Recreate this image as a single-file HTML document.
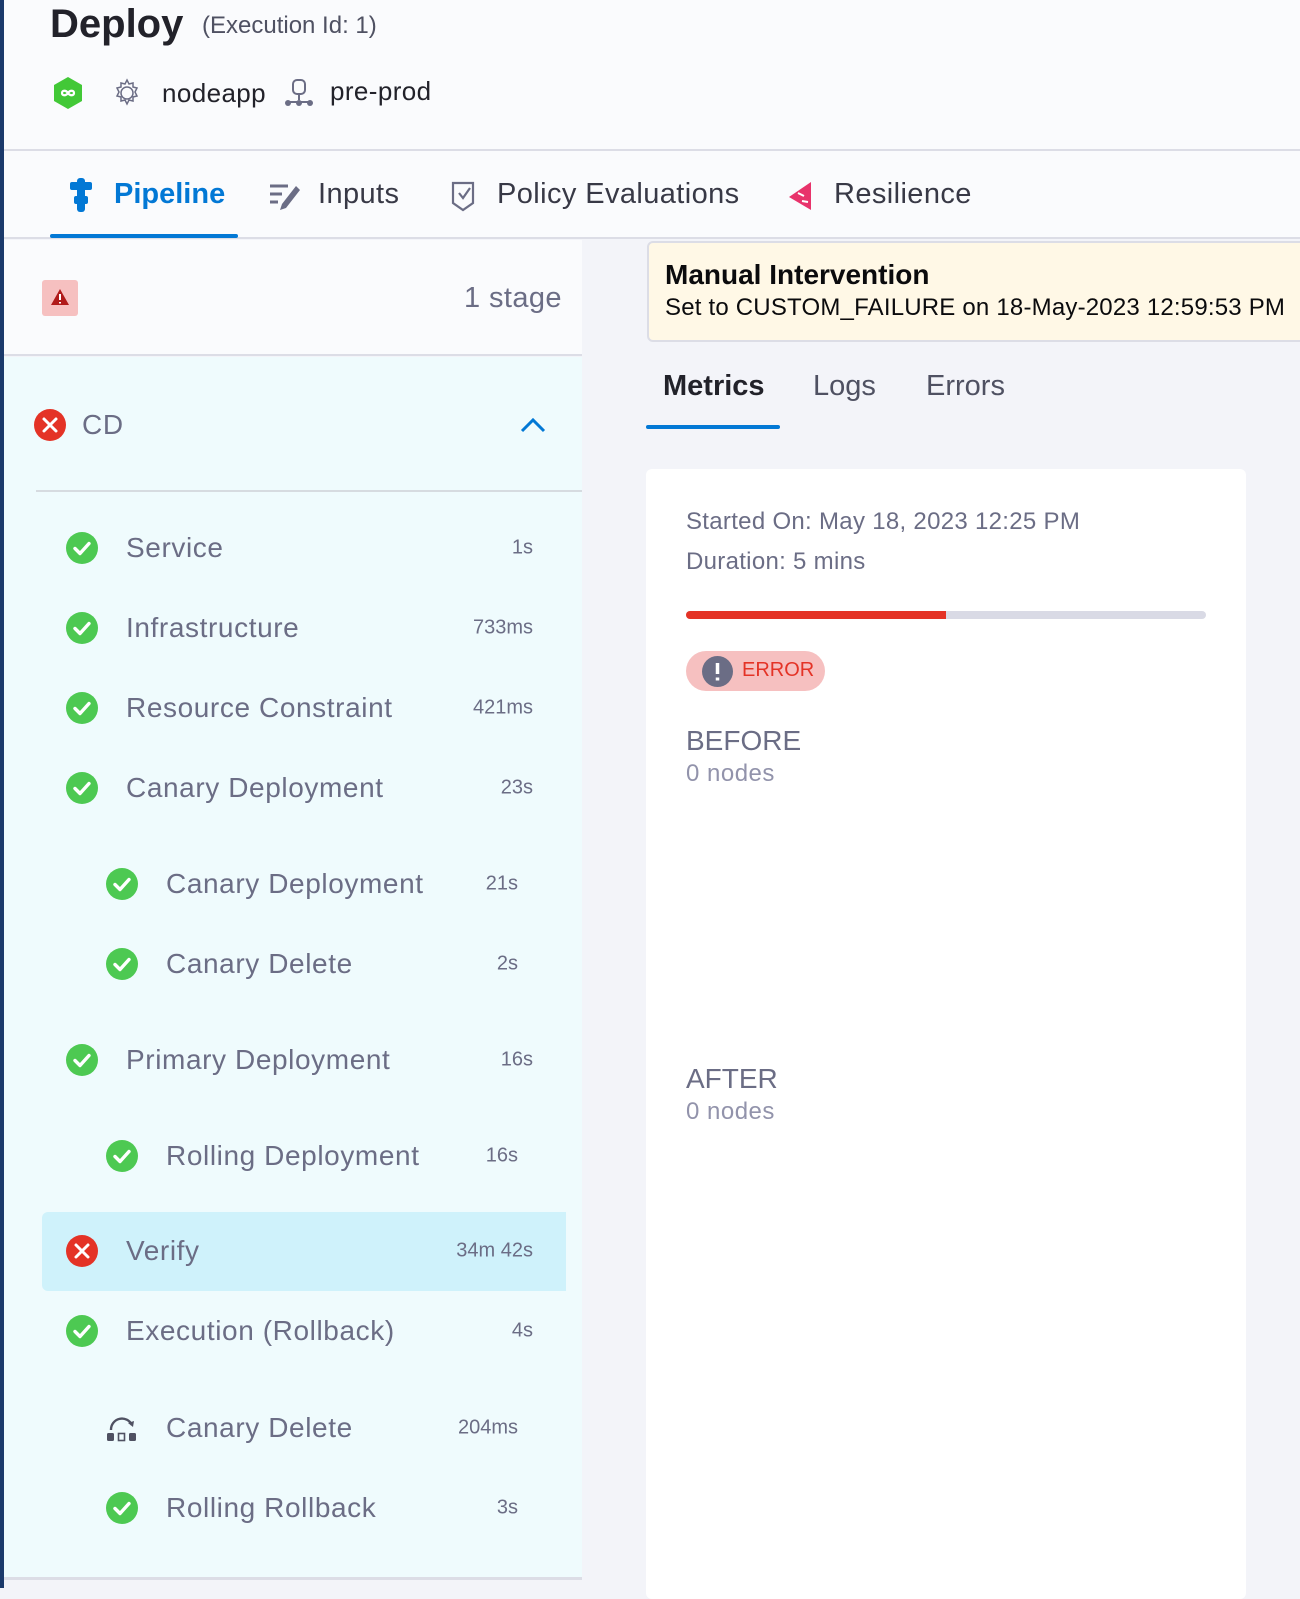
<!DOCTYPE html>
<html><head><meta charset="utf-8"><style>
*{margin:0;padding:0;box-sizing:border-box}
body{width:1300px;height:1588px;overflow:hidden;background:#f3f4f9;font-family:"Liberation Sans",sans-serif;position:relative}
.a{position:absolute;white-space:nowrap}
.row{position:absolute;left:0;width:582px;height:0}
.t{position:absolute;font-size:28px;color:#6b6d85;transform:translateY(-50%);letter-spacing:0.6px}
.d{position:absolute;font-size:20px;color:#6b6d85;transform:translateY(-50%);text-align:right}
.ic{position:absolute;transform:translate(-50%,-50%)}
.tab{letter-spacing:0.4px}
</style></head><body>
<div class="a" style="left:0;top:0;width:1300px;height:151px;background:#fafbfd;border-bottom:2px solid #dcdde6"></div>
<div class="a" style="left:0;top:0;width:4px;height:1588px;background:#1b3a6b;z-index:5"></div>
<div class="a" style="left:50px;top:2px;font-size:40px;font-weight:bold;color:#22222a">Deploy</div>
<div class="a" style="left:202px;top:12px;font-size:24px;color:#4f5162">(Execution Id: 1)</div>
<svg class="a" style="left:52px;top:76px" width="32" height="34" viewBox="0 0 32 34"><path d="M16 1 L30 9 L30 25 L16 33 L2 25 L2 9Z" fill="#42c837"/><path d="M10 17 c0-3 4-3 6 0 s6 3 6 0 s-4-3-6 0 s-6 3-6 0z" fill="none" stroke="#fff" stroke-width="2.2"/></svg>
<svg class="a" style="left:112px;top:78px" width="30" height="30" viewBox="0 0 30 30"><circle cx="15" cy="15" r="6" fill="none" stroke="#6b6d85" stroke-width="1.5"/><path d="M15 2 l2 4 4-1 0 4 4 1-2 4 2 4-4 1 0 4-4-1-2 4-2-4-4 1 0-4-4-1 2-4-2-4 4-1 0-4 4 1z" fill="none" stroke="#6b6d85" stroke-width="1.5"/></svg>
<div class="a" style="left:162px;top:78px;font-size:26px;color:#22222a;letter-spacing:0.4px">nodeapp</div>
<svg class="a" style="left:284px;top:78px" width="30" height="30" viewBox="0 0 30 30"><rect x="9" y="2" width="12" height="14" rx="4" fill="none" stroke="#6b6d85" stroke-width="2"/><path d="M15 16v6M4 24h22" stroke="#6b6d85" stroke-width="2"/><circle cx="4" cy="25" r="3" fill="#6b6d85"/><circle cx="15" cy="25" r="3" fill="#6b6d85"/><circle cx="26" cy="25" r="3" fill="#6b6d85"/></svg>
<div class="a" style="left:330px;top:76px;font-size:26px;color:#22222a;letter-spacing:0.4px">pre-prod</div>
<div class="a" style="left:0;top:151px;width:1300px;height:88px;background:#fafbfd;border-bottom:2px solid #dcdde6"></div>
<svg class="a" style="left:68px;top:178px" width="26" height="34" viewBox="0 0 26 34"><rect x="2" y="4" width="22" height="8" rx="2" fill="#0278d5"/><rect x="9" y="0" width="8" height="34" rx="3" fill="#0278d5"/><rect x="6" y="18" width="14" height="8" rx="2" fill="#0278d5"/></svg>
<div class="a" style="left:114px;top:178px;font-size:29px;font-weight:bold;color:#0278d5">Pipeline</div>
<div class="a" style="left:50px;top:234px;width:188px;height:4px;background:#0278d5;border-radius:2px"></div>
<svg class="a" style="left:268px;top:180px" width="34" height="30" viewBox="0 0 34 30"><path d="M2 6h18M2 14h12M2 22h8" stroke="#6b6d85" stroke-width="3"/><path d="M14 24 L28 6 L32 10 L18 28 L12 30Z" fill="#6b6d85"/></svg>
<div class="a tab" style="left:318px;top:178px;font-size:29px;color:#383946">Inputs</div>
<svg class="a" style="left:450px;top:180px" width="28" height="32" viewBox="0 0 28 32"><path d="M3 3h20v20l-10 7-10-7z" fill="none" stroke="#6b6d85" stroke-width="2.2"/><path d="M9 13l4 5 7-10" fill="none" stroke="#6b6d85" stroke-width="2.2"/></svg>
<div class="a tab" style="left:497px;top:178px;font-size:29px;color:#383946">Policy Evaluations</div>
<svg class="a" style="left:788px;top:181px" width="26" height="30" viewBox="0 0 26 30"><path d="M23 1 L23 29 L1 16Z" fill="#e8336b"/><path d="M10 12l6 3M14 20l6 1" stroke="#fff" stroke-width="2"/></svg>
<div class="a tab" style="left:834px;top:178px;font-size:29px;color:#383946">Resilience</div>

<div class="a" style="left:0;top:240px;width:582px;height:116px;background:#fafbfd;border-bottom:2px solid #dcdde6"></div>
<div class="a" style="left:42px;top:280px;width:36px;height:36px;background:#f6c0c0;border-radius:3px"></div>
<svg class="a" style="left:50px;top:288px" width="20" height="18" viewBox="0 0 20 18"><path d="M10 1 L19 17 L1 17Z" fill="#b01a1a"/><path d="M10 6v6M10 14v1.5" stroke="#fff" stroke-width="2"/></svg>
<div class="a" style="left:464px;top:282px;font-size:29px;color:#6b6d85;letter-spacing:0.4px">1 stage</div>

<div class="a" style="left:0;top:357px;width:582px;height:1223px;background:#effbfd;border-bottom:3px solid #dcdde6"></div>
<div class="a" style="left:36px;top:490px;width:546px;height:2px;background:#d6dbe0"></div>
<div class="a" style="left:42px;top:1212px;width:524px;height:79px;background:#cff2fb;border-radius:6px 0 0 6px"></div>

<svg width="0" height="0" style="position:absolute"><defs>
<symbol id="ok" viewBox="0 0 32 32"><circle cx="16" cy="16" r="16" fill="#4dc952"/><path d="M9 16.5l5 5 9-10" fill="none" stroke="#fff" stroke-width="3.4" stroke-linecap="round" stroke-linejoin="round"/></symbol>
<symbol id="er" viewBox="0 0 32 32"><circle cx="16" cy="16" r="16" fill="#e43326"/><path d="M10 10l12 12M22 10l-12 12" stroke="#fff" stroke-width="3" stroke-linecap="round"/></symbol>
</defs></svg>

<div class="row" style="top:425px"><svg class="ic" style="left:50px" width="32" height="32"><use href="#er"/></svg><div class="t" style="left:82px">CD</div>
<svg class="ic" style="left:533px" width="28" height="18" viewBox="0 0 28 18"><path d="M3 15L14 4l11 11" fill="none" stroke="#0278d5" stroke-width="3"/></svg></div>

<div class="row" style="top:548px"><svg class="ic" style="left:82px" width="32" height="32"><use href="#ok"/></svg><div class="t" style="left:126px">Service</div><div class="d" style="right:49px">1s</div></div>
<div class="row" style="top:628px"><svg class="ic" style="left:82px" width="32" height="32"><use href="#ok"/></svg><div class="t" style="left:126px">Infrastructure</div><div class="d" style="right:49px">733ms</div></div>
<div class="row" style="top:708px"><svg class="ic" style="left:82px" width="32" height="32"><use href="#ok"/></svg><div class="t" style="left:126px">Resource Constraint</div><div class="d" style="right:49px">421ms</div></div>
<div class="row" style="top:788px"><svg class="ic" style="left:82px" width="32" height="32"><use href="#ok"/></svg><div class="t" style="left:126px">Canary Deployment</div><div class="d" style="right:49px">23s</div></div>
<div class="row" style="top:884px"><svg class="ic" style="left:122px" width="32" height="32"><use href="#ok"/></svg><div class="t" style="left:166px">Canary Deployment</div><div class="d" style="right:64px">21s</div></div>
<div class="row" style="top:964px"><svg class="ic" style="left:122px" width="32" height="32"><use href="#ok"/></svg><div class="t" style="left:166px">Canary Delete</div><div class="d" style="right:64px">2s</div></div>
<div class="row" style="top:1060px"><svg class="ic" style="left:82px" width="32" height="32"><use href="#ok"/></svg><div class="t" style="left:126px">Primary Deployment</div><div class="d" style="right:49px">16s</div></div>
<div class="row" style="top:1156px"><svg class="ic" style="left:122px" width="32" height="32"><use href="#ok"/></svg><div class="t" style="left:166px">Rolling Deployment</div><div class="d" style="right:64px">16s</div></div>
<div class="row" style="top:1251px"><svg class="ic" style="left:82px" width="32" height="32"><use href="#er"/></svg><div class="t" style="left:126px">Verify</div><div class="d" style="right:49px">34m 42s</div></div>
<div class="row" style="top:1331px"><svg class="ic" style="left:82px" width="32" height="32"><use href="#ok"/></svg><div class="t" style="left:126px">Execution (Rollback)</div><div class="d" style="right:49px">4s</div></div>
<div class="row" style="top:1428px"><svg class="ic" style="left:122px" width="34" height="28" viewBox="0 0 34 28"><path d="M6 16 A11 11 0 0 1 27 11" fill="none" stroke="#4f5162" stroke-width="2.4"/><path d="M23 9l5 4 1-6z" fill="#4f5162"/><rect x="2" y="19" width="7" height="8" rx="1.5" fill="#4f5162"/><rect x="13.5" y="19.5" width="6" height="7" fill="none" stroke="#4f5162" stroke-width="1.6"/><rect x="24" y="19" width="7" height="8" rx="1.5" fill="#4f5162"/></svg><div class="t" style="left:166px">Canary Delete</div><div class="d" style="right:64px">204ms</div></div>
<div class="row" style="top:1508px"><svg class="ic" style="left:122px" width="32" height="32"><use href="#ok"/></svg><div class="t" style="left:166px">Rolling Rollback</div><div class="d" style="right:64px">3s</div></div>

<div class="a" style="left:647px;top:241px;width:680px;height:101px;background:#fff8e6;border:2px solid #dcdde6;border-radius:6px"></div>
<div class="a" style="left:665px;top:259px;font-size:28px;font-weight:bold;color:#0b0b0d">Manual Intervention</div>
<div class="a" style="left:665px;top:294px;font-size:24px;color:#0b0b0d;letter-spacing:0.2px">Set to CUSTOM_FAILURE on 18-May-2023 12:59:53 PM</div>

<div class="a" style="left:663px;top:370px;font-size:29px;font-weight:bold;color:#22222a">Metrics</div>
<div class="a" style="left:813px;top:370px;font-size:29px;color:#4f5162">Logs</div>
<div class="a" style="left:926px;top:370px;font-size:29px;color:#4f5162">Errors</div>
<div class="a" style="left:646px;top:425px;width:134px;height:4px;background:#0278d5;border-radius:2px"></div>

<div class="a" style="left:646px;top:469px;width:600px;height:1130px;background:#fff;border-radius:6px"></div>
<div class="a" style="left:686px;top:508px;font-size:24px;color:#6b6d85;letter-spacing:0.3px">Started On: May 18, 2023 12:25 PM</div>
<div class="a" style="left:686px;top:548px;font-size:24px;color:#6b6d85;letter-spacing:0.3px">Duration: 5 mins</div>
<div class="a" style="left:686px;top:611px;width:520px;height:8px;background:#d9dae5;border-radius:4px"></div>
<div class="a" style="left:686px;top:611px;width:260px;height:8px;background:#e43326;border-radius:4px 0 0 4px"></div>
<div class="a" style="left:686px;top:651px;width:139px;height:40px;background:#f6c0c0;border-radius:20px"></div>
<svg class="a" style="left:702px;top:656px" width="31" height="31" viewBox="0 0 31 31"><circle cx="15.5" cy="15.5" r="15.5" fill="#6b6d85"/><path d="M15.5 7v11M15.5 21.5v3" stroke="#fff" stroke-width="3.5"/></svg>
<div class="a" style="left:742px;top:659px;font-size:20px;color:#e43326">ERROR</div>
<div class="a" style="left:686px;top:725px;font-size:28px;color:#6b6d85">BEFORE</div>
<div class="a" style="left:686px;top:760px;font-size:24px;color:#9293ab;letter-spacing:0.5px">0 nodes</div>
<div class="a" style="left:686px;top:1063px;font-size:28px;color:#6b6d85">AFTER</div>
<div class="a" style="left:686px;top:1098px;font-size:24px;color:#9293ab;letter-spacing:0.5px">0 nodes</div>
</body></html>
